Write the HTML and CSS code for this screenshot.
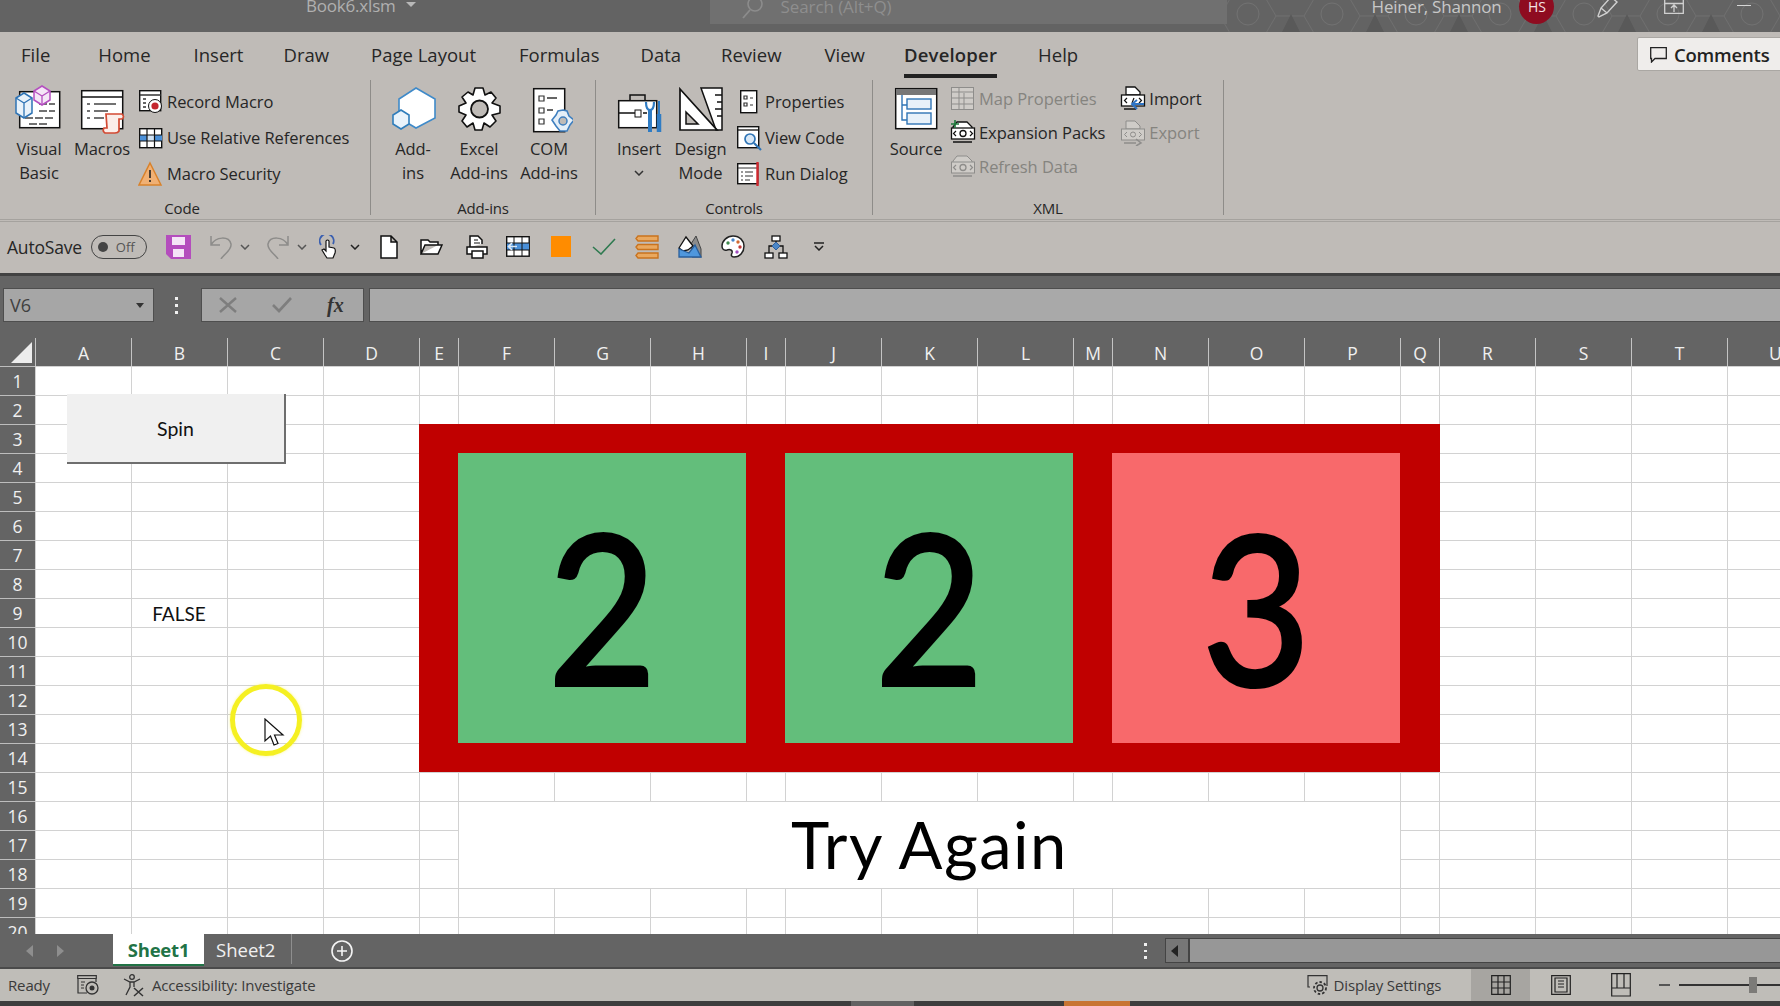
FILE: index.html
```html
<!DOCTYPE html>
<html lang="en">
<head>
<meta charset="utf-8">
<title>Book6.xlsm - Excel</title>
<link rel="stylesheet" href="styles.css">
</head>
<body>
<div class="app">
  <header class="titlebar">
    <svg class="hexes" width="560" height="32" viewBox="0 0 560 32"><defs><pattern id="hx" width="84" height="32" patternUnits="userSpaceOnUse"><path d="M0 16 L14 -8 H42 L56 16 L42 40 H14 Z M56 16 H84" fill="none" stroke="#6f6f6f"/><circle cx="28" cy="14" r="11" fill="none" stroke="#717171"/><path d="M62 32 L71 14 L80 32Z" fill="#595959"/></pattern></defs><rect width="560" height="32" fill="url(#hx)"/></svg>
    <span class="doc">Book6.xlsm</span><span class="doc-arrow"></span>
    <div class="search">
      <svg width="24" height="22" viewBox="0 0 24 22"><circle cx="15" cy="4" r="7" fill="none" stroke="#8c8c8c" stroke-width="1.6"/><path d="M10 10 L3 18" stroke="#8c8c8c" stroke-width="1.8"/></svg>
      <span>Search (Alt+Q)</span>
    </div>
    <span class="user">Heiner, Shannon</span>
    <span class="avatar">HS</span>
    <svg class="tb-pen" width="26" height="18" viewBox="0 0 26 18"><path d="M3 16 L6 8 L16 -3 L22 2 L12 13 L4 17Z M6 8 L12 13" fill="none" stroke="#d0d0d0" stroke-width="1.4"/></svg>
    <svg class="tb-share" width="20" height="14" viewBox="0 0 20 14"><path d="M.7 0 V13.3 H19.3 V0 M.7 3.5 H19.3 M10 12 V5 M7 8 L10 5 L13 8" fill="none" stroke="#d0d0d0" stroke-width="1.3"/></svg>
    <span class="tb-min"></span>
  </header>

  <nav class="tabs">
    <span class="tab t-file">File</span>
    <span class="tab t-home">Home</span>
    <span class="tab t-ins">Insert</span>
    <span class="tab t-draw">Draw</span>
    <span class="tab t-page">Page Layout</span>
    <span class="tab t-form">Formulas</span>
    <span class="tab t-data">Data</span>
    <span class="tab t-rev">Review</span>
    <span class="tab t-view">View</span>
    <span class="tab t-dev">Developer</span>
    <span class="tab t-help">Help</span>
    <button class="comments">
      <svg width="17" height="16" viewBox="0 0 17 16"><path d="M.7.7 H16.3 V11.5 H5 L1.5 15 V11.5 H.7Z" fill="none" stroke="#222" stroke-width="1.3"/></svg>
      Comments
    </button>
  </nav>

  <section class="ribbon">
    <div class="group g-code">
      <div class="gbody">
        <div class="big w-vb">
          <svg width="48" height="50" viewBox="0 0 48 50"><rect x="4.7" y="7.7" width="40" height="36" fill="#fff" stroke="#111" stroke-width="1.5"/><path d="M24 20H40M24 27H40M10 34H40M14 40H34" stroke="#444" stroke-width="1.5" stroke-dasharray="8 2"/><path d="M1 14 L9 9 L17 14 V29 L9 34 L1 29Z" fill="#e9f2fa" stroke="#2f74b5" stroke-width="1.5"/><path d="M1 14 L9 19 L17 14 M9 19 V34" fill="none" stroke="#2f74b5" stroke-width="1.3"/><path d="M19 7 L27 2 L35 7 V16 L27 21 L19 16Z" fill="#f4e6f6" stroke="#b54fc0" stroke-width="1.5"/><path d="M19 7 L27 12 L35 7 M27 12 V21" fill="none" stroke="#b54fc0" stroke-width="1.3"/></svg>
          <span>Visual<br>Basic</span>
        </div>
        <div class="big w-mac">
          <svg width="48" height="50" viewBox="0 0 48 50"><rect x="3.7" y="6.7" width="41" height="38" fill="#fff" stroke="#111" stroke-width="1.5"/><path d="M4 13 H44" stroke="#111" stroke-width="1.5"/><path d="M9 20H12M16 20H38M9 27H12M16 27H30M9 34H12M16 34H26" stroke="#444" stroke-width="1.6"/><path d="M28 30 H44 Q47 33 44 35 H41 V47 Q40 49 37 49 H27 Q24 47 26 44 H29Z" fill="#fbeeea" stroke="#d34a33" stroke-width="1.7"/></svg>
          <span>Macros</span>
        </div>
        <div class="smalls s-code">
          <div class="small"><svg width="26" height="26" viewBox="0 0 26 26"><rect x="1.7" y="1.7" width="21" height="20" fill="#fff" stroke="#111" stroke-width="1.4"/><path d="M2 6 H23 M5 10H8M5 14H8M5 18H8" stroke="#333" stroke-width="1.3"/><circle cx="17" cy="17" r="6.5" fill="#fff" stroke="#111"/><circle cx="17" cy="17" r="3.6" fill="#c4262e"/></svg><span>Record Macro</span></div>
          <div class="small"><svg width="26" height="26" viewBox="0 0 26 26"><rect x="1.7" y="3.7" width="22" height="19" fill="#fff" stroke="#111" stroke-width="1.4"/><rect x="2" y="10" width="22" height="6" fill="#4a90d9"/><rect x="9" y="10" width="7" height="6" fill="#cfe2f5"/><path d="M9 4V23M16.500 4V23M2 10H24M2 16H24" stroke="#111" stroke-width="1.2"/></svg><span>Use Relative References</span></div>
          <div class="small"><svg width="26" height="26" viewBox="0 0 26 26"><path d="M12 2 L23 24 H1Z" fill="#f0b074" stroke="#d9822b" stroke-width="1.5"/><path d="M12 9 V17 M12 19 V21" stroke="#222" stroke-width="1.6"/></svg><span>Macro Security</span></div>
        </div>
      </div>
      <div class="glabel">Code</div>
    </div>

    <div class="group g-add">
      <div class="gbody">
        <div class="big w-add">
          <svg width="48" height="50" viewBox="0 0 48 50"><path d="M27 4 L46 15 V34 L27 44 L10 34 V15Z" fill="#fff" stroke="#3f8ac9" stroke-width="1.6"/><path d="M12 26 L20 31 V40 L12 45 L4 40 V31Z" fill="#e9f3fb" stroke="#2f7dbb" stroke-width="1.6"/></svg>
          <span>Add-<br>ins</span>
        </div>
        <div class="big w-xadd">
          <svg width="48" height="50" viewBox="0 0 48 50"><path d="M20 4 H28 L30 11 L36 8 L41 14 L37 19 L45 22 V29 L37 31 L41 37 L35 43 L29 39 L27 46 H20 L18 39 L12 43 L7 37 L11 31 L4 28 V22 L11 19 L7 13 L13 8 L18 11Z" fill="#fff" stroke="#111" stroke-width="1.6" stroke-linejoin="round"/><circle cx="24.500" cy="25" r="8.500" fill="#bfbbb7" stroke="#111" stroke-width="1.8"/></svg>
          <span>Excel<br>Add-ins</span>
        </div>
        <div class="big w-com">
          <svg width="48" height="50" viewBox="0 0 48 50"><rect x="8.700" y="4.700" width="31" height="43" fill="#fff" stroke="#111" stroke-width="1.5"/><path d="M14 12h5v5h-5zM14 24h5v5h-5zM14 35h5v5h-5z" fill="none" stroke="#333" stroke-width="1.200"/><path d="M22 14H32M22 26H28" stroke="#333" stroke-width="1.500"/><path d="M38 26 L42 27 L44 32 L49 36 L45 41 L42 47 H35 L31 42 L27 36 L31 31 L33 27Z" fill="#e5eff8" stroke="#3f7fbf" stroke-width="1.600"/><circle cx="38" cy="37" r="4" fill="#bfbbb7" stroke="#3f7fbf" stroke-width="1.500"/></svg>
          <span>COM<br>Add-ins</span>
        </div>
      </div>
      <div class="glabel">Add-ins</div>
    </div>

    <div class="group g-ctl">
      <div class="gbody">
        <div class="big w-insert">
          <svg width="48" height="50" viewBox="0 0 48 50"><path d="M15 16 V11 H30 V16" fill="none" stroke="#111" stroke-width="1.500"/><rect x="3.700" y="16.700" width="38" height="27" fill="#fff" stroke="#111" stroke-width="1.500"/><path d="M4 29 H20 M28 29 H32" stroke="#111" stroke-width="1.300"/><rect x="20" y="26" width="6" height="7" fill="#fff" stroke="#111"/><path d="M35 25 V48" stroke="#2f7cc4" stroke-width="4"/><path d="M31 18 Q31 26 35 26 Q39 26 39 18" fill="none" stroke="#2f7cc4" stroke-width="2.200"/><path d="M44 17 V30" stroke="#2f7cc4" stroke-width="2"/><path d="M44 30 V48" stroke="#2f7cc4" stroke-width="4.500"/></svg>
          <span>Insert</span>
          <svg class="chev" width="10" height="6" viewBox="0 0 10 6"><path d="M1 1 L5 5 L9 1" fill="none" stroke="#333" stroke-width="1.500"/></svg>
        </div>
        <div class="big w-design">
          <svg width="48" height="50" viewBox="0 0 48 50"><path d="M24 4 H45 V46 H39Z" fill="#fff" stroke="#111" stroke-width="1.500"/><path d="M38 11H45M40 18H45M38 25H45M40 32H45" stroke="#111" stroke-width="1.300"/><path d="M3 5 L40 46 H3Z" fill="#fff" stroke="#111" stroke-width="1.700"/><path d="M9 28 L21 40 H9Z" fill="#bfbbb7" stroke="#111" stroke-width="1.500"/></svg>
          <span>Design<br>Mode</span>
        </div>
        <div class="smalls s-ctl">
          <div class="small"><svg width="26" height="26" viewBox="0 0 26 26"><rect x="4.700" y="1.700" width="16" height="22" fill="#fff" stroke="#111" stroke-width="1.400"/><path d="M8 7h3v3H8zM8 14h3v3H8zM14 9h3M14 16h3" fill="none" stroke="#333" stroke-width="1.200"/></svg><span>Properties</span></div>
          <div class="small"><svg width="26" height="26" viewBox="0 0 26 26"><rect x="1.700" y="1.700" width="21" height="21" fill="#fff" stroke="#111" stroke-width="1.400"/><path d="M2 5H23" stroke="#111" stroke-width="1.300"/><circle cx="14" cy="14" r="5" fill="#d9e8f6" stroke="#2f74b5" stroke-width="1.700"/><path d="M18 18 L25 25" stroke="#2f74b5" stroke-width="2.200"/></svg><span>View Code</span></div>
          <div class="small"><svg width="26" height="26" viewBox="0 0 26 26"><rect x="1.700" y="2.700" width="20" height="20" fill="#fff" stroke="#111" stroke-width="1.400"/><path d="M2 7H22M5 11H7M9 11H17M5 15H7M9 15H17M5 19H7M9 19H14" stroke="#333" stroke-width="1.200"/><path d="M21.500 1V25" stroke="#d0282e" stroke-width="2.400"/></svg><span>Run Dialog</span></div>
        </div>
      </div>
      <div class="glabel">Controls</div>
    </div>

    <div class="group g-xml">
      <div class="gbody">
        <div class="big w-src">
          <svg width="48" height="50" viewBox="0 0 48 50"><rect x="3.700" y="4.700" width="41" height="40" fill="#fff" stroke="#111" stroke-width="1.500"/><rect x="4" y="5" width="40" height="6" fill="#777"/><path d="M10 11 V36 H15 M10 21 H15" fill="none" stroke="#2f74b5" stroke-width="1.400"/><rect x="15" y="15" width="24" height="10" fill="#e8f1f9" stroke="#2f74b5" stroke-width="1.400"/><rect x="15" y="29" width="24" height="11" fill="#e8f1f9" stroke="#2f74b5" stroke-width="1.400"/></svg>
          <span>Source</span>
        </div>
        <div class="smalls s-xml">
          <div class="small off"><svg width="26" height="26" viewBox="0 0 26 26"><rect x="1.500" y="1.500" width="22" height="22" fill="#cfccc8" stroke="#8e8d8b"/><path d="M2 6H23M2 12H23M2 18H23M9 2V24M14 7V24" stroke="#8e8d8b"/></svg><span>Map Properties</span></div>
          <div class="small"><svg width="26" height="26" viewBox="0 0 26 26"><path d="M7 2 H17 L22 7 V18 H3 V7 Z" fill="#fff" stroke="#111" stroke-width="1.300"/><rect x="1.500" y="8" width="23" height="11" fill="#fff" stroke="#111" stroke-width="1.300"/><path d="M6 11 L3.500 13.500 L6 16M20 11 L22.500 13.500 L20 16" fill="none" stroke="#111" stroke-width="1.200"/><circle cx="13" cy="13.500" r="3" fill="none" stroke="#111" stroke-width="1.300"/><path d="M3 22H22" stroke="#111" stroke-width="1.500"/><path d="M5 0V8M1 4H9" stroke="#1e7a3c" stroke-width="1.600"/></svg><span>Expansion Packs</span></div>
          <div class="small off"><svg width="26" height="26" viewBox="0 0 26 26"><path d="M7 2 H17 L22 7 V18 H3 V7 Z" fill="#cfccc8" stroke="#8e8d8b"/><rect x="1.500" y="8" width="23" height="11" fill="#cfccc8" stroke="#8e8d8b"/><path d="M6 11 L3.500 13.500 L6 16M20 11 L22.500 13.500 L20 16" fill="none" stroke="#8e8d8b" stroke-width="1.200"/><circle cx="13" cy="13.500" r="3" fill="none" stroke="#8e8d8b" stroke-width="1.300"/><path d="M3 22H22" stroke="#8e8d8b" stroke-width="1.500"/></svg><span>Refresh Data</span></div>
        </div>
        <div class="smalls s-xml s-xml2">
          <div class="small"><svg width="26" height="26" viewBox="0 0 26 26"><path d="M6 1 H15 L20 6 V9 H6Z" fill="#fff" stroke="#111" stroke-width="1.300"/><rect x="1.500" y="9" width="23" height="11" fill="#fff" stroke="#111" stroke-width="1.300"/><path d="M7 12 L4.500 14.500 L7 17M19 12 L21.500 14.500 L19 17M14 12 L12 17" fill="none" stroke="#111" stroke-width="1.200"/><path d="M4 23H16" stroke="#111" stroke-width="1.500"/><path d="M24 18 H13 M17 14 L12 18 L17 23" fill="none" stroke="#2f74c4" stroke-width="2"/></svg><span>Import</span></div>
          <div class="small off"><svg width="26" height="26" viewBox="0 0 26 26"><path d="M6 1 H15 L20 6 V9 H6Z" fill="#cfccc8" stroke="#8e8d8b"/><rect x="1.500" y="9" width="23" height="11" fill="#cfccc8" stroke="#8e8d8b"/><path d="M7 12 L4.500 14.500 L7 17M19 12 L21.500 14.500 L19 17" fill="none" stroke="#8e8d8b"/><circle cx="13" cy="14.500" r="2.500" fill="none" stroke="#8e8d8b"/><path d="M4 23H16M16 19 L21 23 L16 26" fill="none" stroke="#8e8d8b" stroke-width="1.500"/></svg><span>Export</span></div>
        </div>
      </div>
      <div class="glabel">XML</div>
    </div>
  </section>

  <section class="qat">
    <span class="autosave">AutoSave</span>
    <span class="toggle"><i></i><b>Off</b></span>
    <svg class="q-save" width="25" height="24" viewBox="0 0 25 24"><path d="M0 0 H25 V24 H5 L0 19Z" fill="#b44dbd"/><rect x="6" y="2" width="13" height="8" fill="#f4e4f6"/><rect x="7" y="14" width="11" height="8" fill="#f4e4f6"/></svg>
    <svg class="q-undo" width="22" height="24" viewBox="0 0 22 24"><path d="M1 1 V10 H10 M1 10 C6 1 19 1 21 9 C22 15 14 19 11 24" fill="none" stroke="#8d8c8a" stroke-width="1.500"/></svg>
    <svg class="chev q-c1" width="10" height="6" viewBox="0 0 10 6"><path d="M1 1 L5 5 L9 1" fill="none" stroke="#555" stroke-width="1.500"/></svg>
    <svg class="q-redo" width="22" height="24" viewBox="0 0 22 24"><path d="M21 1 V10 H12 M21 10 C16 1 3 1 1 9 C0 15 8 19 11 24" fill="none" stroke="#8d8c8a" stroke-width="1.500"/></svg>
    <svg class="chev q-c2" width="10" height="6" viewBox="0 0 10 6"><path d="M1 1 L5 5 L9 1" fill="none" stroke="#555" stroke-width="1.500"/></svg>
    <svg class="q-touch" width="18" height="24" viewBox="0 0 18 24"><path d="M2 10 A7 7 0 1 1 14 9" fill="none" stroke="#3a5fb0" stroke-width="1.800"/><path d="M6 20 L3 15 L5 14 L7 16 V6 Q8.500 4 10 6 V12 L15 13 Q17 14 16 18 L14 23 H8Z" fill="#fff" stroke="#111" stroke-width="1.200"/></svg>
    <svg class="chev q-c3" width="10" height="6" viewBox="0 0 10 6"><path d="M1 1 L5 5 L9 1" fill="none" stroke="#222" stroke-width="1.500"/></svg>
    <svg class="q-new" width="18" height="24" viewBox="0 0 18 24"><path d="M1 1 H11 L17 7 V23 H1Z M11 1 V7 H17" fill="#fff" stroke="#111" stroke-width="1.500"/></svg>
    <svg class="q-open" width="23" height="16" viewBox="0 0 23 16"><path d="M1 15 V1 H8 L10 3 H18 V6 M1 15 H18 L22 6 H5 Z" fill="#fff" stroke="#111" stroke-width="1.500"/></svg>
    <svg class="q-print" width="23" height="24" viewBox="0 0 23 24"><path d="M4 12 V1 H12 L16 5 V9" fill="#fff" stroke="#111" stroke-width="1.500"/><path d="M8 5H12M8 8H14" stroke="#111"/><rect x="1" y="12" width="20" height="7" fill="#fff" stroke="#111" stroke-width="1.500"/><rect x="6" y="16" width="11" height="7" fill="#fff" stroke="#111" stroke-width="1.500"/></svg>
    <svg class="q-tbl" width="24" height="21" viewBox="0 0 24 21"><rect x=".7" y=".7" width="22.500" height="19.500" fill="#fff" stroke="#111" stroke-width="1.400"/><rect x="1" y="7" width="22" height="7" fill="#4a90d9"/><path d="M8 1V20M16 1V20M1 7H23M1 14H23" stroke="#111"/><path d="M11 10.500 H3 M6 7 L2.500 10.500 L6 14" fill="none" stroke="#dbe9f7" stroke-width="1.600"/></svg>
    <span class="q-orange"></span>
    <svg class="q-check" width="24" height="17" viewBox="0 0 24 17"><path d="M1 9 L9 16 L23 1" fill="none" stroke="#2f7a50" stroke-width="1.600"/></svg>
    <svg class="q-stack" width="24" height="24" viewBox="0 0 24 24"><g fill="#e9a85f" stroke="#c9731e" stroke-width="1.400"><path d="M3 1 H23 V6 H3 L1 3.500Z"/><path d="M3 9.500 H23 V14.500 H3 L1 12Z"/><path d="M3 18 H23 V23 H3 L1 20.500Z"/></g></svg>
    <svg class="q-mtn" width="24" height="23" viewBox="0 0 24 23"><path d="M13 9 L18 1 L23 14 V22 H14Z" fill="#8c8c8c" stroke="#444"/><path d="M1 13 L8 2 L15 11 L10 15 L5 16Z" fill="#fff" stroke="#111" stroke-width="1.300"/><path d="M1 14 L11 18 L17 10 L23 22 H1Z" fill="#4f97dd" stroke="#2a5f9c" stroke-width="1.300"/></svg>
    <svg class="q-pal" width="24" height="23" viewBox="0 0 24 23"><path d="M12 1 C19 1 23 6 23 11 C23 17 19 22 13 22 C10 22 10 20 11 18 C12 15 9 14 6 15 C2 16 1 13 1 11 C1 6 6 1 12 1Z" fill="#fff" stroke="#222" stroke-width="1.500"/><circle cx="7" cy="8" r="1.700" fill="#3f8a4f"/><circle cx="12" cy="5" r="1.700" fill="#4a86c8"/><circle cx="17" cy="7" r="1.700" fill="#d26a32"/><circle cx="19" cy="12" r="1.700" fill="#c23a3a"/><circle cx="16" cy="17" r="1.700" fill="#a24fc0"/></svg>
    <svg class="q-tree" width="24" height="24" viewBox="0 0 24 24"><rect x="8" y="1" width="8" height="5" fill="#fff" stroke="#111" stroke-width="1.300"/><rect x="1" y="18" width="8" height="5" fill="#fff" stroke="#111" stroke-width="1.300"/><rect x="15" y="18" width="8" height="5" fill="#fff" stroke="#111" stroke-width="1.300"/><path d="M12 6V9M5 18V11H19V18" fill="none" stroke="#111" stroke-width="1.300"/><path d="M12 7 L16 11 L12 15 L8 11Z" fill="#4a86c8" stroke="#2f5f9c"/></svg>
    <svg class="q-more" width="10" height="9" viewBox="0 0 10 9"><path d="M0 1 H10 M1 4 L5 8 L9 4" fill="none" stroke="#222" stroke-width="1.500"/></svg>
  </section>

  <section class="formula">
    <div class="namebox"><span>V6</span><i></i></div>
    <span class="vdots"><i></i><i></i><i></i></span>
    <div class="fxbtns">
      <svg width="18" height="16" viewBox="0 0 18 16"><path d="M1 1 L17 15 M17 1 L1 15" stroke="#7e7e7e" stroke-width="2.400"/></svg>
      <svg width="20" height="16" viewBox="0 0 20 16"><path d="M1 8 L7 14 L19 1" fill="none" stroke="#7e7e7e" stroke-width="2.600"/></svg>
      <em>fx</em>
    </div>
    <div class="fxinput"></div>
  </section>

  <div class="colhead">
    <span class="corner"></span>
    <span class="c w">A</span><span class="c w">B</span><span class="c w">C</span><span class="c w">D</span><span class="c n">E</span><span class="c w">F</span><span class="c w">G</span><span class="c w">H</span><span class="c n">I</span><span class="c w">J</span><span class="c w">K</span><span class="c w">L</span><span class="c n">M</span><span class="c w">N</span><span class="c w">O</span><span class="c w">P</span><span class="c n">Q</span><span class="c w">R</span><span class="c w">S</span><span class="c w">T</span><span class="c w">U</span>
  </div>

  <main class="sheet">
    <div class="rowhead">
      <span>1</span><span>2</span><span>3</span><span>4</span><span>5</span><span>6</span><span>7</span><span>8</span><span>9</span><span>10</span><span>11</span><span>12</span><span>13</span><span>14</span><span>15</span><span>16</span><span>17</span><span>18</span><span>19</span><span>20</span>
    </div>
    <div class="cells">
      <i class="gl c1"></i><i class="gl c2"></i><i class="gl c3"></i><i class="gl c4"></i><i class="gl c5"></i><i class="gl c6"></i><i class="gl c7"></i><i class="gl c8"></i><i class="gl c9"></i><i class="gl c10"></i><i class="gl c11"></i><i class="gl c12"></i><i class="gl c13"></i><i class="gl c14"></i><i class="gl c15"></i><i class="gl c16"></i><i class="gl c17"></i><i class="gl c18"></i><i class="gl c19"></i><i class="gl c20"></i><i class="gl c21"></i>
      <div class="false">FALSE</div>
      <div class="frame"></div>
      <div class="reel r1"><span>2</span></div>
      <div class="reel r2"><span>2</span></div>
      <div class="reel r3 lose"><span>3</span></div>
      <div class="result">Try Again</div>
      <button class="spin">Spin</button>
      <span class="halo"></span>
      <svg class="cursor" width="22" height="32" viewBox="0 0 22 32"><path d="M1 1 V23 L6.500 18 L10 27 L14 25.500 L10.500 17 L19 17Z" fill="#fff" stroke="#111" stroke-width="1.200"/></svg>
    </div>
  </main>

  <section class="sheetbar">
    <svg class="nav-l" width="7" height="12" viewBox="0 0 7 12"><path d="M7 0 L0 6 L7 12Z" fill="#8e8e8e"/></svg>
    <svg class="nav-r" width="7" height="12" viewBox="0 0 7 12"><path d="M0 0 L7 6 L0 12Z" fill="#8e8e8e"/></svg>
    <span class="stab on">Sheet1</span>
    <span class="stab">Sheet2</span>
    <svg class="plus" width="24" height="24" viewBox="0 0 24 24"><circle cx="12" cy="12" r="10" fill="none" stroke="#f4f4f4" stroke-width="1.600"/><path d="M12 7V17M7 12H17" stroke="#f4f4f4" stroke-width="1.600"/></svg>
    <span class="vdots sb-dots"><i></i><i></i><i></i></span>
    <div class="hscroll"><span class="hs-btn"></span></div>
  </section>

  <footer class="status">
    <span class="ready">Ready</span>
    <svg class="st-mac" width="22" height="20" viewBox="0 0 22 20"><path d="M.7.700 H19.300 V3.500 H.7Z M1 4 V18 H10 M19 4 V7" fill="none" stroke="#333" stroke-width="1.200"/><path d="M4 7H8M4 10H7M4 13H7" stroke="#333"/><circle cx="15" cy="13" r="6" fill="none" stroke="#333" stroke-width="1.300"/><circle cx="15" cy="13" r="2.500" fill="#333"/></svg>
    <svg class="st-acc" width="22" height="23" viewBox="0 0 22 23"><circle cx="9" cy="3" r="2.300" fill="none" stroke="#333" stroke-width="1.300"/><path d="M1 5 L7 8 H11 L17 5 M7 8 V13 L3 21 M11 8 V13" fill="none" stroke="#333" stroke-width="1.300"/><path d="M11 14 L20 22 M20 14 L11 22" stroke="#333" stroke-width="1.500"/></svg>
    <span class="acc">Accessibility: Investigate</span>
    <svg class="st-disp" width="21" height="20" viewBox="0 0 21 20"><path d="M3 12 H1 V.7 H20 V11" fill="none" stroke="#333" stroke-width="1.200"/><circle cx="13" cy="13" r="3" fill="none" stroke="#333" stroke-width="1.300"/><circle cx="13" cy="13" r="6" fill="none" stroke="#333" stroke-width="1.800" stroke-dasharray="2.500 2"/></svg>
    <span class="disp">Display Settings</span>
    <span class="view on"><svg width="20" height="20" viewBox="0 0 20 20"><path d="M.7.7H19.300V19.300H.7ZM7 1V19M13 1V19M1 7H19M1 13H19" fill="none" stroke="#222" stroke-width="1.200"/></svg></span>
    <span class="view"><svg width="20" height="20" viewBox="0 0 20 20"><path d="M.7.7H19.300V19.300H.7ZM4 3H16V17H4ZM7 6H13M7 9H13M7 12H13" fill="none" stroke="#222" stroke-width="1.200"/></svg></span>
    <span class="view"><svg width="20" height="24" viewBox="0 0 20 24"><path d="M.7.7H19.300V23H.7ZM1 15H19M6 1V15M13 1V15" fill="none" stroke="#222" stroke-width="1.200"/></svg></span>
    <span class="zminus"></span>
    <div class="zoomtrack"><i></i></div>
  </footer>

  <div class="taskbar"><i class="tk-gray"></i><i class="tk-orange"></i></div>
</div>
</body>
</html>
```

FILE: styles.css
```css
* { box-sizing: border-box; }
html, body { margin: 0; height: 100%; overflow: hidden; }
body { background: #646464; font-family: "Open Sans", "Noto Sans", sans-serif; color: #262626; }
.app { width: 1780px; height: 1006px; display: flex; flex-direction: column; overflow: hidden; }
svg { display: block; flex: none; }

/* title bar */
.titlebar { height: 32px; background: #636363; display: flex; align-items: flex-start; position: relative; overflow: hidden; color: #b9b9b9; font-size: 17px; line-height: 14px; flex: none; }
.hexes { position: absolute; right: 0; top: 0; }
.doc { margin-left: 306px; position: relative; letter-spacing: -.2px; color: #b0b0b0; line-height: 12px; }
.doc-arrow { width: 0; height: 0; border: 5px solid transparent; border-top: 5px solid #b8b8b8; margin: 2px 0 0 10px; }
.search { margin-left: 294px; width: 517px; height: 24px; background: #707070; display: flex; align-items: flex-start; padding-left: 30px; color: #8e8e8e; position: relative; }
.search svg { margin-right: 17px; }
.search span { letter-spacing: -.1px; }
.user { margin-left: 145px; position: relative; color: #c8c8c8; letter-spacing: -.2px; }
.avatar { margin: -11px 0 0 18px; width: 35px; height: 35px; border-radius: 50%; background: #8e0c20; color: #f3e2e4; position: relative; display: flex; align-items: flex-end; justify-content: center; font-size: 14px; line-height: 24px; padding-bottom: 5px; }
.tb-pen { margin-left: 41px; position: relative; }
.tb-share { margin-left: 43px; position: relative; }
.tb-min { margin: 5px 0 0 53px; width: 14px; height: 1px; background: #d6d6d6; position: relative; }

/* ribbon tabs */
.tabs { height: 48px; background: #bfbbb7; display: flex; align-items: center; font-size: 18.500px; position: relative; flex: none; }
.tab { position: relative; line-height: 24px; margin-top: -2px; }
.t-file { margin-left: 21px; }
.t-home { margin-left: 48px; }
.t-ins { margin-left: 43px; }
.t-draw { margin-left: 40px; }
.t-page { margin-left: 42px; }
.t-form { margin-left: 43px; }
.t-data { margin-left: 41px; }
.t-rev { margin-left: 40px; }
.t-view { margin-left: 43px; }
.t-dev { margin-left: 39px; font-weight: 600; letter-spacing: .2px; }
.t-dev::after { content: ""; position: absolute; left: 0; right: 0; top: 31px; height: 4px; background: #222; }
.t-help { margin-left: 41px; }
.comments { position: absolute; left: 1637px; top: 5px; width: 160px; height: 34px; background: #efedeb; border: 1px solid #aaa7a3; border-radius: 2px; display: flex; align-items: center; gap: 7px; padding: 1px 0 0 12px; font: 600 18.500px "Open Sans", sans-serif; letter-spacing: -.2px; color: #222; }

/* ribbon body */
.ribbon { height: 142px; background: #bfbbb7; display: flex; border-bottom: 3px double #a5a29e; flex: none; font-size: 16.500px; line-height: 24px; letter-spacing: -.05px; }
.group { display: flex; flex-direction: column; height: 135px; border-right: 1px solid #8e8c89; flex: none; }
.gbody { display: flex; height: 118px; }
.glabel { text-align: center; font-size: 15px; line-height: 22px; letter-spacing: -.2px; height: 17px; margin-top: -1px; }
.g-code { width: 371px; }
.g-code .gbody { padding-left: 8px; }
.g-add { width: 225px; }
.g-add .gbody { padding-left: 14px; }
.g-ctl { width: 277px; }
.g-ctl .gbody { padding-left: 15px; }
.g-xml { width: 351px; }
.g-xml .gbody { padding-left: 14px; }
.g-code .glabel { padding-right: 6px; }
.big { display: flex; flex-direction: column; align-items: center; text-align: center; padding-top: 4px; flex: none; }
.big svg:first-child { margin-bottom: 3px; }
.chev { margin: 9px auto 0; }
.w-vb { width: 62px; }
.w-mac { width: 64px; }
.w-add { width: 56px; }
.w-xadd { width: 76px; }
.w-com { width: 64px; }
.w-insert { width: 56px; }
.w-design { width: 67px; }
.w-src { width: 58px; }
.smalls { display: flex; flex-direction: column; padding-top: 4px; }
.small { height: 36px; display: flex; align-items: center; gap: 3px; white-space: nowrap; }
.s-code { margin-left: 4px; }
.s-ctl { margin-left: 2px; }
.s-xml { margin-left: 5px; padding-top: 2px; }
.s-xml .small { height: 34px; }
.s-xml2 { margin-left: 15px; }
.off { color: #85847f; }

/* quick access */
.qat { height: 51px; background: #bfbbb7; display: flex; align-items: center; flex: none; padding-bottom: 2px; }
.autosave { margin-left: 7px; font-size: 17.500px; letter-spacing: -.2px; }
.toggle { margin-left: 9px; width: 56px; height: 24px; border: 1.500px solid #444; border-radius: 12px; display: flex; align-items: center; padding-left: 6px; font-size: 13px; color: #555; }
.toggle i { width: 10px; height: 10px; border-radius: 50%; background: #444; margin-right: 8px; }
.toggle b { font-weight: 400; }
.q-save { margin-left: 19px; }
.q-undo { margin-left: 19px; }
.q-c1 { margin: 0 0 0 8px; }
.q-redo { margin-left: 17px; }
.q-c2 { margin: 0 0 0 8px; }
.q-touch { margin-left: 12px; }
.q-c3 { margin: 0 0 0 13px; }
.q-new { margin-left: 20px; }
.q-open { margin-left: 22px; }
.q-print { margin-left: 23px; }
.q-tbl { margin-left: 17px; }
.q-orange { margin-left: 21px; width: 20px; height: 21px; background: #ff8c00; }
.q-check { margin-left: 21px; }
.q-stack { margin-left: 19px; }
.q-mtn { margin-left: 19px; }
.q-pal { margin-left: 19px; }
.q-tree { margin-left: 19px; }
.q-more { margin-left: 26px; }

/* formula bar */
.formula { height: 65px; background: #646464; border-top: 3px solid #424242; display: flex; padding-top: 12px; flex: none; }
.namebox { margin-left: 3px; width: 151px; height: 34px; background: #a6a6a6; border: 1px solid #4e4e4e; display: flex; align-items: center; justify-content: space-between; padding: 0 9px 0 6px; font-size: 18px; color: #404040; }
.namebox i { width: 0; height: 0; border: 4px solid transparent; border-top: 5px solid #333; margin-top: 4px; }
.vdots { display: flex; flex-direction: column; gap: 4px; justify-content: center; width: 3px; }
.vdots i { width: 3px; height: 3px; background: #f0f0f0; }
.formula .vdots { margin-left: 21px; height: 34px; }
.fxbtns { margin-left: 23px; width: 163px; height: 34px; background: #a6a6a6; border: 1px solid #4e4e4e; display: flex; align-items: center; padding-left: 17px; }
.fxbtns svg:nth-child(2) { margin-left: 35px; }
.fxbtns em { margin-left: 35px; font: italic 700 20px "Liberation Serif", serif; color: #333; }
.fxinput { margin-left: 5px; flex: 1; height: 34px; background: #a9a9a9; border: 1px solid #4e4e4e; border-right: 0; }

/* column headers */
.colhead { height: 28px; background: #646464; display: flex; flex: none; position: relative; font-size: 17.500px; color: #f0f0f0; }
.corner { width: 35px; flex: none; position: relative; }
.corner::after { content: ""; position: absolute; left: 11px; top: 4px; width: 21px; height: 21px; background: #ededed; clip-path: polygon(100% 0, 100% 100%, 0 100%); }
.c { flex: none; border-left: 1px solid #c4c4c4; text-align: center; line-height: 30px; }
.w { width: 96px; }
.n { width: 39px; }

/* sheet */
.sheet { height: 568px; display: flex; overflow: hidden; flex: none; }
.rowhead { width: 35px; flex: none; background: #646464; display: flex; flex-direction: column; }
.rowhead span { height: 29px; flex: none; border-top: 1px solid #bdbdbd; color: #f0f0f0; font-size: 17.500px; line-height: 29px; text-align: center; }
.cells { flex: 1; overflow: hidden; position: relative; background: #fff repeating-linear-gradient(to bottom, #d2d2d2 0, #d2d2d2 1px, transparent 1px, transparent 29px); display: grid; grid-template-columns: repeat(4, 96px) 39px repeat(3, 96px) 39px repeat(3, 96px) 39px repeat(3, 96px) 39px repeat(4, 96px); grid-template-rows: repeat(20, 29px); }
.gl { border-left: 1px solid #d2d2d2; grid-row: 1 / -1; }
.c1 { grid-column: 1; } .c2 { grid-column: 2; } .c3 { grid-column: 3; } .c4 { grid-column: 4; } .c5 { grid-column: 5; } .c6 { grid-column: 6; } .c7 { grid-column: 7; } .c8 { grid-column: 8; } .c9 { grid-column: 9; } .c10 { grid-column: 10; } .c11 { grid-column: 11; } .c12 { grid-column: 12; } .c13 { grid-column: 13; } .c14 { grid-column: 14; } .c15 { grid-column: 15; } .c16 { grid-column: 16; } .c17 { grid-column: 17; } .c18 { grid-column: 18; } .c19 { grid-column: 19; } .c20 { grid-column: 20; } .c21 { grid-column: 21; }
.false { grid-column: 2; grid-row: 9; text-align: center; font: 400 19px/29px "Lato", sans-serif; color: #111; padding-top: 1px; }
.frame { grid-column: 5 / 18; grid-row: 3 / 15; background: #c00000; margin-right: -1px; }
.reel { grid-row: 4 / 14; background: #63be7b; color: #000; font: 400 208px/303px "Lato", sans-serif; text-align: center; z-index: 1; overflow: hidden; }
.reel span { display: inline-block; transform: scaleX(.9); -webkit-text-stroke: 4px #000; }
.r1 { grid-column: 6 / 9; }
.r2 { grid-column: 10 / 13; }
.r3 { grid-column: 14 / 17; }
.lose { background: #f8696b; }
.result { grid-column: 6 / 17; grid-row: 16 / 19; margin: 1px 0 0 1px; background: #fff; text-align: center; font: 400 65px/85px "Lato", sans-serif; letter-spacing: 1.500px; color: #000; }
.spin { position: absolute; left: 32px; top: 28px; width: 219px; height: 70px; background: #f0f0f0; border: 0; border-right: 2px solid #6e6e6e; border-bottom: 2px solid #6e6e6e; font: 400 19.500px "Lato", sans-serif; color: #111; padding: 0; }
.halo { position: absolute; left: 195px; top: 318px; width: 72px; height: 72px; border: 5px solid #f5f022; border-radius: 50%; box-shadow: 0 0 3px rgba(245,240,34,.5); }
.cursor { position: absolute; left: 229px; top: 352px; }

/* sheet tabs */
.sheetbar { height: 35px; background: #646464; display: flex; align-items: flex-start; border-bottom: 2px solid #4a4a4a; flex: none; }
.nav-l { margin: 11px 0 0 26px; }
.nav-r { margin: 11px 0 0 24px; }
.stab { height: 30px; font-size: 18.500px; line-height: 31px; color: #f0f0f0; }
.stab.on { margin-left: 49px; width: 91px; background: #fff; color: #217346; font-weight: 700; text-align: center; border-bottom: 2px solid #217346; height: 32px; letter-spacing: -.2px; }
.stab.on + .stab { margin-left: 12px; width: 76px; border-right: 1px solid #8e8e8e; }
.plus { margin: 5px 0 0 38px; }
.sb-dots { margin: 9px 0 0 790px; height: 16px; }
.hscroll { margin: 4px 0 0 18px; flex: 1; height: 25px; background: #979797; border: 1px solid #444; border-right: 0; display: flex; }
.hs-btn { width: 24px; background: #777; border-right: 2px solid #444; position: relative; }
.hs-btn::after { content: ""; position: absolute; left: 5px; top: 6px; border: 6px solid transparent; border-left: 0; border-right: 7px solid #222; }

/* status bar */
.status { height: 32px; background: #bfbdb8; display: flex; align-items: center; font-size: 15px; color: #3a3a3a; flex: none; letter-spacing: -.15px; }
.ready { margin-left: 8px; }
.st-mac { margin-left: 27px; }
.st-acc { margin-left: 24px; }
.acc { margin-left: 7px; }
.st-disp { margin-left: 991px; }
.disp { margin-left: 6px; }
.view { width: 59px; height: 32px; display: flex; align-items: center; justify-content: center; margin-left: 1px; }
.view.on { background: #a7a5a1; margin-left: 30px; }
.zminus { margin-left: 9px; width: 11px; height: 2px; background: #555; }
.zoomtrack { margin-left: 9px; flex: 1; height: 2px; background: #333; position: relative; }
.zoomtrack i { position: absolute; left: 70px; top: -7px; width: 8px; height: 16px; background: #7c7b78; }

/* bottom strip */
.taskbar { flex: 1; background: #3d3d3d; display: flex; }
.tk-gray { margin-left: 851px; width: 63px; background: #626262; }
.tk-orange { margin-left: 150px; width: 66px; background: #c87533; }
```
